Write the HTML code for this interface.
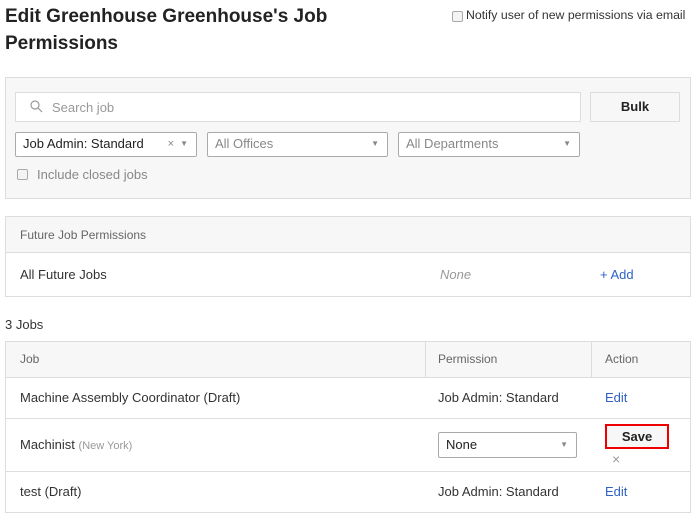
<!DOCTYPE html><html><head><style>
body{margin:0;width:697px;height:514px;background:#fff;font-family:"Liberation Sans",sans-serif;color:#333;position:relative;overflow:hidden}
.a{position:absolute}
.t{font-size:13px;white-space:nowrap}
.sel{position:absolute;background:#fff;border:1px solid #aaa;border-radius:2px;box-sizing:border-box;font-size:13px;padding:0 7px;line-height:22px;color:#888}
.arr{position:absolute;right:8px;top:0;font-size:8px;color:#888}
.cb{position:absolute;width:9px;height:9px;border:1px solid #aaa;border-radius:2px;background:#f4f4f4}
.box{position:absolute;left:5px;width:686px;border:1px solid #ddd;box-sizing:border-box}
.line{position:absolute;left:5px;width:686px;height:1px;background:#ddd}
a{color:#2f62c4;text-decoration:none}
</style></head><body>
<div class="a" style="left:5px;top:3px;font-size:19px;font-weight:bold;line-height:27px;color:#222">Edit Greenhouse Greenhouse's Job<br>Permissions</div>
<div class="cb" style="left:452px;top:11px"></div>
<div class="a t" style="left:466px;top:8px;font-size:12.3px">Notify user of new permissions via email</div>

<div class="box" style="top:77px;height:122px;background:#f7f7f7"></div>
<div class="a" style="left:15px;top:92px;width:566px;height:30px;background:#fff;border:1px solid #ddd;box-sizing:border-box"></div>
<svg class="a" style="left:30px;top:100px" width="13" height="13" viewBox="0 0 13 13"><circle cx="5" cy="5" r="4" fill="none" stroke="#999" stroke-width="1.2"/><path d="M8 8l4 4" stroke="#999" stroke-width="1.2"/></svg>
<div class="a t" style="left:52px;top:100px;color:#999">Search job</div>
<div class="a" style="left:590px;top:92px;width:90px;height:30px;background:#f7f7f7;border:1px solid #ddd;box-sizing:border-box;text-align:center;line-height:28px;font-size:13px;font-weight:bold;color:#222">Bulk</div>
<div class="sel" style="left:15px;top:132px;width:182px;height:25px;color:#222">Job Admin: Standard<span class="arr" style="right:22px;color:#888;font-size:11px">×</span><span class="arr">▼</span></div>
<div class="sel" style="left:207px;top:132px;width:181px;height:25px">All Offices<span class="arr">▼</span></div>
<div class="sel" style="left:398px;top:132px;width:182px;height:25px">All Departments<span class="arr">▼</span></div>
<div class="cb" style="left:17px;top:169px"></div>
<div class="a t" style="left:37px;top:167px;color:#888">Include closed jobs</div>

<div class="box" style="top:216px;height:81px"></div>
<div class="a" style="left:6px;top:217px;width:684px;height:35px;background:#f7f7f7;border-bottom:1px solid #ddd"></div>
<div class="a t" style="left:20px;top:228px;font-size:12px;color:#666">Future Job Permissions</div>
<div class="a t" style="left:20px;top:267px">All Future Jobs</div>
<div class="a t" style="left:440px;top:267px;color:#999;font-style:italic">None</div>
<div class="a t" style="left:600px;top:267px"><a>+ Add</a></div>

<div class="a t" style="left:5px;top:317px">3 Jobs</div>
<div class="box" style="top:341px;height:172px"></div>
<div class="a" style="left:6px;top:342px;width:684px;height:35px;background:#f7f7f7;border-bottom:1px solid #ddd"></div>
<div class="a" style="left:425px;top:342px;width:1px;height:35px;background:#ddd"></div>
<div class="a" style="left:591px;top:342px;width:1px;height:35px;background:#ddd"></div>
<div class="a t" style="left:20px;top:352px;font-size:12px;color:#666">Job</div>
<div class="a t" style="left:438px;top:352px;font-size:12px;color:#666">Permission</div>
<div class="a t" style="left:605px;top:352px;font-size:12px;color:#666">Action</div>
<div class="line" style="top:418px"></div>
<div class="line" style="top:471px"></div>
<div class="a t" style="left:20px;top:390px">Machine Assembly Coordinator (Draft)</div>
<div class="a t" style="left:438px;top:390px">Job Admin: Standard</div>
<div class="a t" style="left:605px;top:390px"><a>Edit</a></div>
<div class="a t" style="left:20px;top:437px">Machinist <span style="font-size:11px;color:#999">(New York)</span></div>
<div class="sel" style="left:438px;top:432px;width:139px;height:26px;line-height:24px;color:#222">None<span class="arr">▼</span></div>
<div class="a" style="left:605px;top:424px;width:64px;height:25px;border:2px solid #e00;box-sizing:border-box;background:#f7f7f7;text-align:center;line-height:21px;font-size:13px;font-weight:bold;color:#222">Save</div>
<div class="a" style="left:612px;top:451px;font-size:14px;color:#999">×</div>
<div class="a t" style="left:20px;top:484px">test (Draft)</div>
<div class="a t" style="left:438px;top:484px">Job Admin: Standard</div>
<div class="a t" style="left:605px;top:484px"><a>Edit</a></div>
</body></html>
